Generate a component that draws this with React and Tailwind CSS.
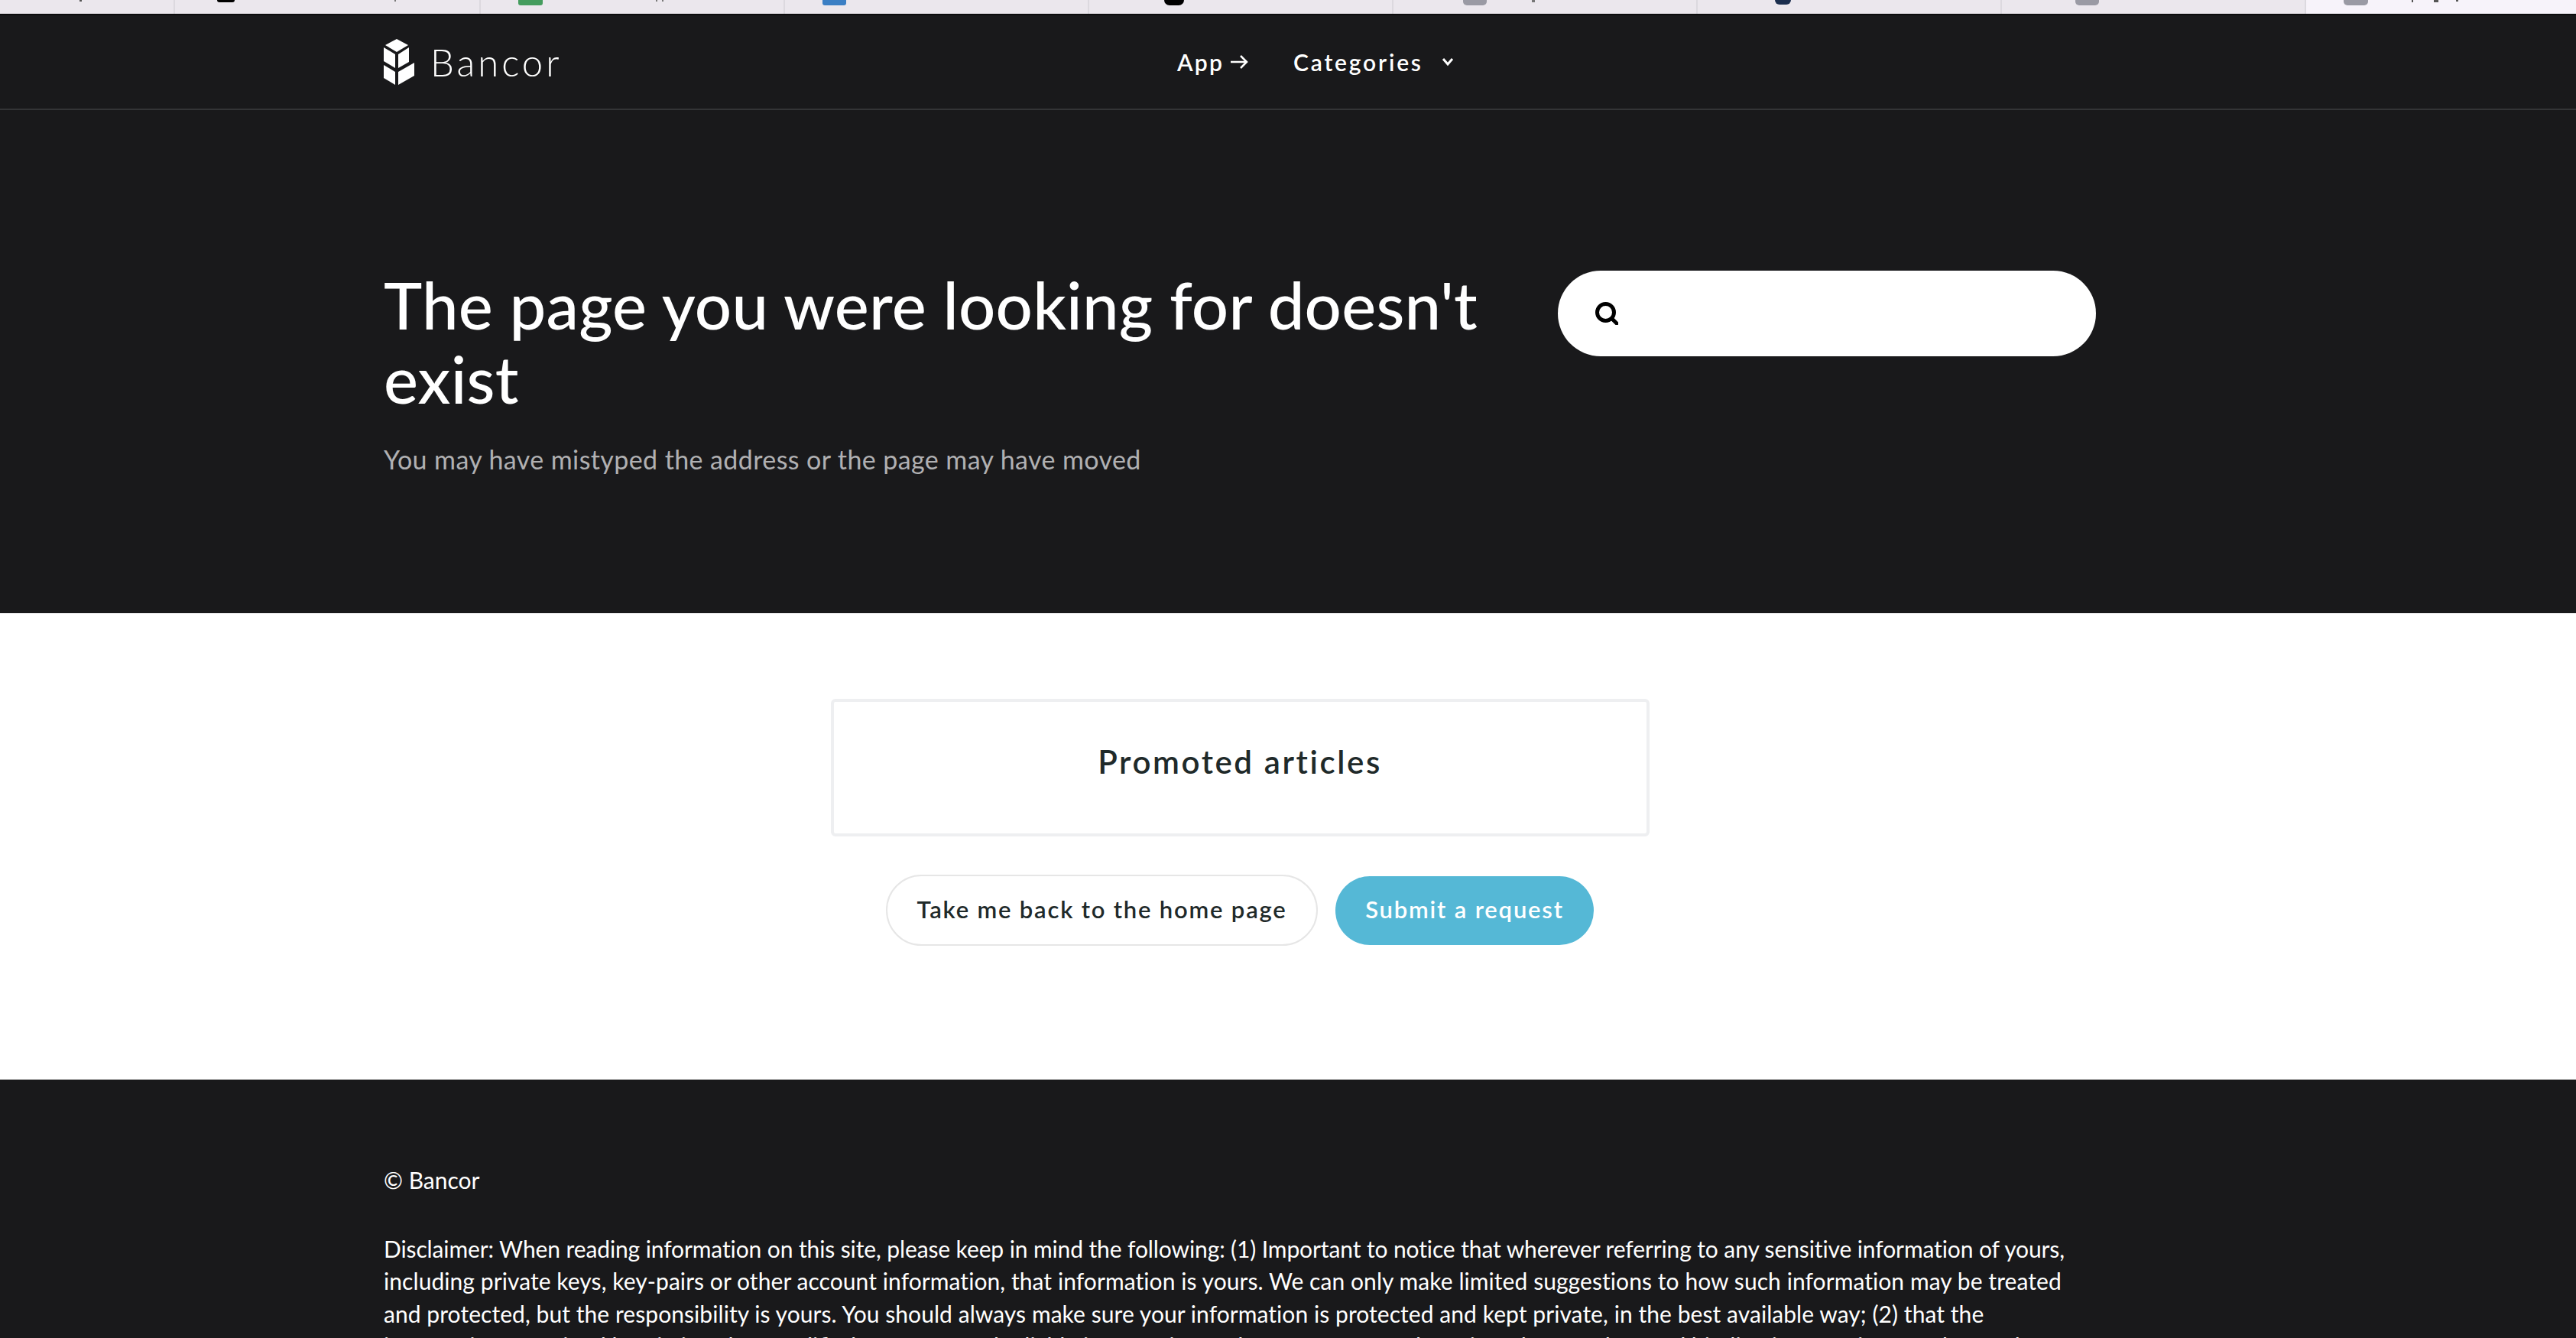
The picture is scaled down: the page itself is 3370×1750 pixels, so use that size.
import React from 'react'

const tabs = [
    {w: "w-[229px]", bits: ["ml-[104px] w-[3px] h-[2px] bg-[#555]"]},
    {w: "w-[400px]", bits: ["ml-[55px] w-[23px] h-[3px] bg-black rounded-b-full", "ml-[209px] w-[2px] h-[2px] bg-[#777]"]},
    {w: "w-[398px]", bits: ["ml-[49px] w-[32px] h-[7px] bg-[#459c5e] rounded-b-[3px]", "ml-[148px] w-[2px] h-[2px] bg-[#777]", "ml-[6px] w-[2px] h-[2px] bg-[#777]"]},
    {w: "w-[398px]", bits: ["ml-[49px] w-[31px] h-[7px] bg-[#3b7fc4] rounded-b-[3px]"]},
    {w: "w-[398px]", bits: ["ml-[98px] w-[26px] h-[7px] bg-black rounded-b-full"]},
    {w: "w-[398px]", bits: ["ml-[91px] w-[31px] h-[7px] bg-[#9a9aa4] rounded-b-[5px]", "ml-[59px] w-[4px] h-[3px] bg-[#777]"]},
    {w: "w-[398px]", bits: ["ml-[101px] w-[21px] h-[6px] bg-[#1b2e4e] rounded-b-full"]},
    {w: "w-[398px]", bits: ["ml-[96px] w-[31px] h-[7px] bg-[#9a9aa4] rounded-b-[5px]"]},
]

// per line tracking, the font is a touch off from the original one
const disclaimer = [
    {cls: "tracking-[-0.11px]", text: "Disclaimer: When reading information on this site, please keep in mind the following: (1) Important to notice that wherever referring to any sensitive information of yours,"},
    {cls: "tracking-[0.07px]", text: "including private keys, key-pairs or other account information, that information is yours. We can only make limited suggestions to how such information may be treated"},
    {cls: "tracking-[0.06px]", text: "and protected, but the responsibility is yours. You should always make sure your information is protected and kept private, in the best available way; (2) that the"},
    {cls: "", text: "information contained herein is only a modified summary of the liable information and you are not to rely on it and a complete and binding information or other such"},
]

const BrowserTabs = () => (
    <div className="flex h-[18px] bg-[#ebe7ed] overflow-hidden">
        {tabs.map((t, i) => (
            <div key={i} className={`${t.w} shrink-0 flex items-start border-r-2 border-[#dcd9df]`}>
                {t.bits.map((b, j) => <div key={j} className={b}/>)}
            </div>
        ))}
        <div className="flex-1 flex items-start bg-[#f7f3fa]">
            <div className="ml-[49px] w-[32px] h-[7px] bg-[#9a9aa4] rounded-b-[5px]"/>
            <div className="ml-[57px] w-[2px] h-[3px] bg-[#555]"/>
            <div className="ml-[27px] w-[6px] h-[3px] bg-[#555]"/>
            <div className="ml-[23px] w-[3px] h-[2px] bg-[#555]"/>
        </div>
    </div>
)

const Logo = () => (
    <svg width="40" height="60" viewBox="0 0 40 60" fill="white">
        <polygon points="17,0 32,8 17,17 2,8"/>
        <polygon points="0,11 15,20 15,38 0,29"/>
        <polygon points="19,20 33,11 33,30 19,38"/>
        <polygon points="0,34 15,43 15,60 0,51"/>
        <polygon points="19,43 40,31 40,48 19,60"/>
    </svg>
)

const Header = () => (
    <header className="h-[126px] border-b-2 border-[#333436] border-t-2 border-t-[#0c0c0d]">
        <div className="ml-[502px] flex items-center h-full">
            <Logo/>
            <span className="ml-[21px] w-[600px] text-[49px] font-light tracking-[4px] leading-none text-white">Bancor</span>
            <nav className="ml-[377px] flex items-center text-[30px] font-semibold text-white">
                <span className="tracking-[2.2px]">App</span>
                <svg className="ml-[8px]" width="24" height="20" viewBox="0 0 24 20" fill="none" stroke="white" strokeWidth="2.5">
                    <path d="M1 10h21M14 2l8 8-8 8"/>
                </svg>
                <span className="ml-[59px] tracking-[2.8px]">Categories</span>
                <svg className="ml-[24px]" width="16" height="12" viewBox="0 0 16 12" fill="none" stroke="white" strokeWidth="3">
                    <path d="M2 2l6 7 6-7"/>
                </svg>
            </nav>
        </div>
    </header>
)

const Hero = () => (
    <section className="h-[658px] pt-[206px]">
        <div className="ml-[502px] w-[2240px] flex items-start">
            <div className="w-[1536px]">
                <h1 className="text-[85px] leading-[97px] font-medium tracking-[0.2px] text-white">The page you were looking for doesn't exist</h1>
                <p className="mt-[35px] text-[34px] leading-[44px] tracking-[0.4px] text-[#b0b0b2]">You may have mistyped the address or the page may have moved</p>
            </div>
            <div className="w-[704px] h-[112px] mt-[4px] rounded-full bg-white flex items-center pl-[49px]">
                <svg width="30" height="30" viewBox="0 0 30 30" fill="none" stroke="black" strokeWidth="5" strokeLinecap="round">
                    <circle cx="13.5" cy="13.5" r="11"/>
                    <path d="M23 23l5 5"/>
                </svg>
            </div>
        </div>
    </section>
)

const Middle = () => (
    <section className="h-[610px] bg-white pt-[112px]">
        <div className="ml-[502px] w-[2240px]">
            <div className="mx-auto w-[1071px] h-[180px] border-4 border-[#eeeff1] rounded-[6px] pt-[50px] text-center text-[42px] leading-[56px] font-semibold tracking-[2.6px] text-[#1f2a2a]">
                Promoted articles
            </div>
            <div className="mt-[50px] flex items-center pl-[657px] gap-[23px] text-[31px] font-semibold tracking-[1.8px]">
                <div className="w-[565px] h-[93px] pb-[2px] rounded-full border-2 border-[#e6e6e6] flex items-center justify-center text-[#1f2a2a]">Take me back to the home page</div>
                <div className="w-[338px] h-[90px] pb-[2px] rounded-full bg-[#55b8d6] flex items-center justify-center text-white">Submit a request</div>
            </div>
        </div>
    </section>
)

const Footer = () => (
    <footer className="h-[338px] overflow-hidden pt-[110px] text-[30px] leading-[42.5px] text-white">
        <div className="ml-[502px]">© Bancor</div>
        <div className="ml-[502px] mt-[47px]">
            {disclaimer.map((line, i) => <div key={i} className={`whitespace-nowrap ${line.cls}`}>{line.text}</div>)}
        </div>
    </footer>
)

export default function App() {
    return (
        <div className="w-[3370px] h-[1750px] overflow-hidden bg-[#19191b] font-['Lato',sans-serif]">
            <BrowserTabs/>
            <Header/>
            <Hero/>
            <Middle/>
            <Footer/>
        </div>
    )
}
